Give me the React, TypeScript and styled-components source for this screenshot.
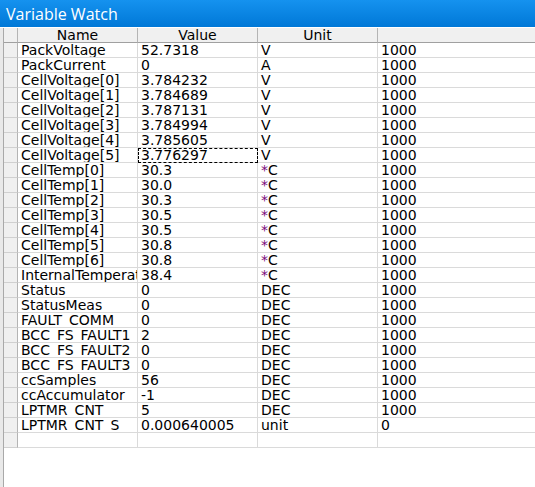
import React from "react";
import styled, { createGlobalStyle } from "styled-components";

const Global = createGlobalStyle`
  html, body { margin: 0; padding: 0; background: #fff; }
  #root { width: 535px; height: 487px; }
`;

const Window = styled.div`
  width: 535px;
  height: 487px;
  display: flex;
  flex-direction: column;
  background: #fff;
  overflow: hidden;
`;

const TitleBar = styled.div`
  flex: none;
  height: 27px;
  padding-left: 6px;
  display: flex;
  align-items: center;
  background: linear-gradient(#1592ef, #0078d7);
  border-bottom: 1px solid #ffffff;
  color: #fff;
  font-family: "Open Sans", "Noto Sans", sans-serif;
  font-size: 16px;
  white-space: nowrap;
`;

const Body = styled.div`
  flex: 1;
  display: flex;
  min-height: 0;
`;

const LeftStrip = styled.div`
  width: 3px;
  flex: none;
  background: #e9e9e9;
`;

const TableArea = styled.div`
  flex: 1;
  border-left: 1px solid #a9a9a9;
  min-width: 0;
`;

const Grid = styled.div`
  display: grid;
  grid-template-columns: 14px 120px 120px 120px 1fr;
  grid-auto-rows: 15px;
  font-family: "DejaVu Sans", sans-serif;
  font-size: 14px;
  line-height: 14px;
  color: #000;
`;

const HeadCell = styled.div`
  background: #f0f0f0;
  border-right: 1px solid #b4b4b4;
  border-bottom: 1px solid #a0a0a0;
  text-align: center;
  overflow: hidden;
  white-space: nowrap;
`;

const RowHead = styled.div`
  background: #f0f0f0;
  border-right: 1px solid #b4b4b4;
  border-bottom: 1px solid #d0d0d0;
`;

const Cell = styled.div<{ $focused?: boolean; $last?: boolean }>`
  border-right: ${(p) => (p.$last ? "none" : "1px solid #dadada")};
  border-bottom: 1px solid #dadada;
  padding-left: 3px;
  overflow: hidden;
  white-space: nowrap;
  outline: ${(p) => (p.$focused ? "1px dashed #000" : "none")};
  outline-offset: -1px;
`;

const Star = styled.span`
  color: #7a0a7a;
`;

type Row = [string, string, string, string];

const rows: Row[] = [
  ["PackVoltage", "52.7318", "V", "1000"],
  ["PackCurrent", "0", "A", "1000"],
  ["CellVoltage[0]", "3.784232", "V", "1000"],
  ["CellVoltage[1]", "3.784689", "V", "1000"],
  ["CellVoltage[2]", "3.787131", "V", "1000"],
  ["CellVoltage[3]", "3.784994", "V", "1000"],
  ["CellVoltage[4]", "3.785605", "V", "1000"],
  ["CellVoltage[5]", "3.776297", "V", "1000"],
  ["CellTemp[0]", "30.3", "*C", "1000"],
  ["CellTemp[1]", "30.0", "*C", "1000"],
  ["CellTemp[2]", "30.3", "*C", "1000"],
  ["CellTemp[3]", "30.5", "*C", "1000"],
  ["CellTemp[4]", "30.5", "*C", "1000"],
  ["CellTemp[5]", "30.8", "*C", "1000"],
  ["CellTemp[6]", "30.8", "*C", "1000"],
  ["InternalTemperature", "38.4", "*C", "1000"],
  ["Status", "0", "DEC", "1000"],
  ["StatusMeas", "0", "DEC", "1000"],
  ["FAULT_COMM", "0", "DEC", "1000"],
  ["BCC_FS_FAULT1", "2", "DEC", "1000"],
  ["BCC_FS_FAULT2", "0", "DEC", "1000"],
  ["BCC_FS_FAULT3", "0", "DEC", "1000"],
  ["ccSamples", "56", "DEC", "1000"],
  ["ccAccumulator", "-1", "DEC", "1000"],
  ["LPTMR_CNT", "5", "DEC", "1000"],
  ["LPTMR_CNT_S", "0.000640005", "unit", "0"],
  ["", "", "", ""],
];

const renderUnit = (u: string) =>
  u.startsWith("*") ? (
    <>
      <Star>*</Star>
      {u.slice(1)}
    </>
  ) : (
    u
  );

export default function App() {
  return (
    <Window>
      <Global />
      <TitleBar>Variable Watch</TitleBar>
      <Body>
        <LeftStrip />
        <TableArea>
          <Grid>
            <HeadCell />
            <HeadCell>Name</HeadCell>
            <HeadCell>Value</HeadCell>
            <HeadCell>Unit</HeadCell>
            <HeadCell style={{ borderRight: "none" }} />
            {rows.map((r, i) => (
              <React.Fragment key={i}>
                <RowHead />
                <Cell>{r[0]}</Cell>
                <Cell $focused={r[0] === "CellVoltage[5]"}>{r[1]}</Cell>
                <Cell>{renderUnit(r[2])}</Cell>
                <Cell $last>{r[3]}</Cell>
              </React.Fragment>
            ))}
          </Grid>
        </TableArea>
      </Body>
    </Window>
  );
}
